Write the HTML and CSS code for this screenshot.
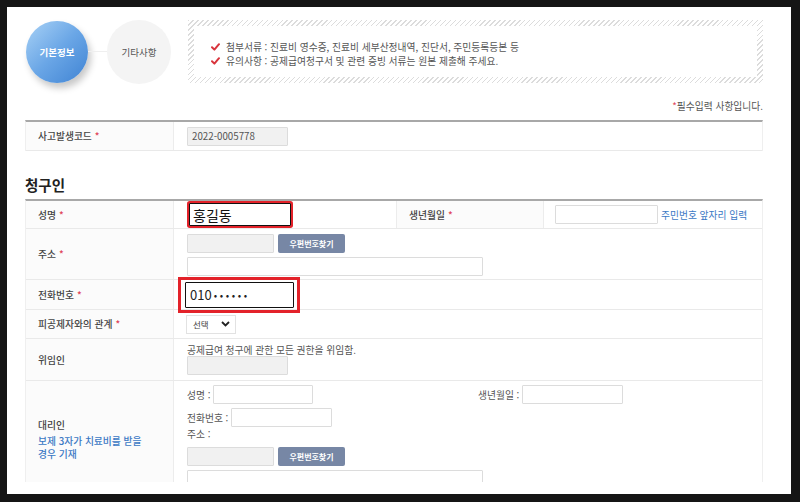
FILE: index.html
```html
<!DOCTYPE html>
<html lang="ko">
<head>
<meta charset="utf-8">
<title>청구서 작성</title>
<link rel="stylesheet" href="styles.css">
</head>
<body>
<div class="frame">
  <div class="top">
    <div class="tabs">
      <div class="tab tab-on">기본정보</div>
      <div class="tab-line"></div>
      <div class="tab tab-off">기타사항</div>
    </div>
    <div class="notice">
      <div class="notice-inner">
        <p class="notice-line"><svg class="check" width="9" height="8" viewBox="0 0 9 8"><path d="M1 4.2 L3.4 6.6 L8 1.2" fill="none" stroke="#d8343c" stroke-width="2" stroke-linecap="round" stroke-linejoin="round"/></svg>첨부서류 : 진료비 영수증, 진료비 세부산정내역, 진단서, 주민등록등본 등</p>
        <p class="notice-line"><svg class="check" width="9" height="8" viewBox="0 0 9 8"><path d="M1 4.2 L3.4 6.6 L8 1.2" fill="none" stroke="#d8343c" stroke-width="2" stroke-linecap="round" stroke-linejoin="round"/></svg>유의사항 : 공제급여청구서 및 관련 증빙 서류는 원본 제출해 주세요.</p>
      </div>
    </div>
  </div>

  <p class="req"><span class="star">*</span>필수입력 사항입니다.</p>

  <div class="table">
    <div class="row row-code">
      <div class="th"><span>사고발생코드</span><span class="star">*</span></div>
      <div class="td"><div class="inp inp-ro w101">2022-0005778</div></div>
    </div>
  </div>

  <h2 class="heading">청구인</h2>

  <div class="table table-main">
    <div class="row row-name">
      <div class="th"><span>성명</span><span class="star">*</span></div>
      <div class="td"><div class="inp inp-hl-name">홍길동</div></div>
      <div class="th th-mid"><span>생년월일</span><span class="star">*</span></div>
      <div class="td td-birth"><div class="inp w103"></div><span class="link">주민번호 앞자리 입력</span></div>
    </div>

    <div class="row row-addr">
      <div class="th"><span>주소</span><span class="star">*</span></div>
      <div class="td td-col">
        <div class="line"><div class="inp inp-ro w87"></div><span class="btn">우편번호찾기</span></div>
        <div class="inp w296"></div>
      </div>
    </div>

    <div class="row row-tel">
      <div class="th"><span>전화번호</span><span class="star">*</span></div>
      <div class="td"><div class="tel-wrap"><div class="inp inp-hl-tel">010<span class="dots">••••••</span></div></div></div>
    </div>

    <div class="row row-rel">
      <div class="th"><span>피공제자와의 관계</span><span class="star">*</span></div>
      <div class="td td-sel">
        <div class="select">선택<svg class="chev" width="9" height="6" viewBox="0 0 9 6"><path d="M1 1 L4.5 4.5 L8 1" fill="none" stroke="#222" stroke-width="1.8"/></svg></div>
      </div>
    </div>

    <div class="row row-del">
      <div class="th">위임인</div>
      <div class="td td-col td-del">
        <p class="txt">공제급여 청구에 관한 모든 권한을 위임함.</p>
        <div class="inp inp-ro w101"></div>
      </div>
    </div>

    <div class="row row-agent">
      <div class="th th-agent">
        <p class="agent-title">대리인</p>
        <p class="agent-note">보제 3자가 치료비를 받을<br>경우 기재</p>
      </div>
      <div class="td td-col td-agent">
        <div class="line">
          <div class="pair pair-left"><span class="lbl">성명 :</span><div class="inp w100"></div></div>
          <div class="pair"><span class="lbl">생년월일 :</span><div class="inp w101"></div></div>
        </div>
        <div class="line"><span class="lbl">전화번호 :</span><div class="inp w101"></div></div>
        <p class="lbl lbl-addr">주소 :</p>
        <div class="line line-zip"><div class="inp inp-ro w87"></div><span class="btn">우편번호찾기</span></div>
        <div class="inp w296"></div>
      </div>
    </div>
  </div>
</div>
</body>
</html>
```

FILE: styles.css
```css
* { box-sizing: border-box; }
html, body { margin: 0; padding: 0; }
body {
  background: #151515;
  padding: 7px;
  font-family: "Noto Sans CJK KR", "Noto Sans", sans-serif;
  font-size: 9.75px;
  color: #444;
}
p { margin: 0; }

.frame {
  width: 784px;
  height: 487px;
  background: #fff;
  overflow: hidden;
  padding: 13px 28px 0 18px;
}

/* top: tabs + notice */
.top {
  display: flex;
  height: 63px;
}
.tabs {
  width: 165px;
  display: flex;
  align-items: center;
  padding-left: 1px;
}
.tab {
  width: 62px;
  height: 62px;
  border-radius: 50%;
  display: flex;
  align-items: center;
  justify-content: center;
  font-size: 9.5px;
  flex: none;
}
.tab-on {
  background: linear-gradient(135deg, #a9d2f6 0%, #6aa6e6 50%, #3f83d3 100%);
  color: #fff;
  font-weight: 700;
  box-shadow: 3px 5px 7px rgba(0, 0, 0, 0.22);
}
.tab-line {
  width: 19px;
  height: 1px;
  background: #efefef;
  flex: none;
}
.tab-off {
  width: 64px;
  height: 64px;
  background: #f4f4f4;
  color: #555;
}
.notice {
  width: 575px;
  flex: none;
  padding: 6px;
  background: repeating-linear-gradient(135deg, #dcdcdc 0 1px, #fff 1px 3.5px);
}
.notice-inner {
  background: #fff;
  height: 100%;
  display: flex;
  flex-direction: column;
  justify-content: center;
  padding: 4px 0 0 17px;
}
.notice-line {
  display: flex;
  align-items: center;
  line-height: 14px;
  color: #555;
}
.check { margin-right: 6px; flex: none; }

.req {
  margin-top: 16px;
  text-align: right;
  line-height: 14px;
  color: #555;
}
.star { color: #e0465a; }
.th .star { margin-left: 3px; }

/* tables */
.table {
  margin-top: 7px;
  border-top: 2px solid #a8a8a8;
  border-left: 1px solid #efefef;
  border-right: 1px solid #efefef;
}
.row {
  display: grid;
  grid-template-columns: 148px 1fr;
  border-bottom: 1px solid #e9e9e9;
}
.th {
  background: #fbfbfb;
  border-right: 1px solid #ececec;
  padding-left: 12px;
  display: flex;
  align-items: center;
  color: #444;
  font-weight: 500;
}
.td {
  padding-left: 13px;
  display: flex;
  align-items: center;
}
.td-col {
  flex-direction: column;
  align-items: flex-start;
}
.row-code { height: 29px; }

.heading {
  margin: 24px 0 4px;
  font-size: 14.5px;
  line-height: 20px;
  font-weight: 700;
  color: #222;
}

.table-main {
  margin-top: 0;
  height: 283px;
  overflow: hidden;
}

.row-name { grid-template-columns: 148px 222px 148px 1fr; height: 28px; }
.th-mid { border-left: 1px solid #ececec; }
.td-birth { padding-left: 11px; }
.link { color: #3a78c4; margin-left: 3px; }

.row-addr { height: 51px; }
.row-addr .td-col { padding-top: 5px; gap: 4px; }
.line { display: flex; align-items: center; gap: 4px; }

.row-tel { height: 30px; }
.row-rel { height: 29px; }
.row-del { height: 42px; }
.td-del { padding-top: 5px; }
.txt { line-height: 12px; color: #555; }

.row-agent { height: 140px; }
.th-agent {
  flex-direction: column;
  align-items: flex-start;
  padding-top: 38px;
}
.agent-title { line-height: 13px; margin-bottom: 3px; }
.agent-note { line-height: 13px; color: #3a78c4; }
.td-agent { padding-top: 4px; }
.td-agent .line { gap: 3px; }
.td-agent .line + .line { margin-top: 4px; }
.pair { display: flex; align-items: center; gap: 3px; }
.pair-left { width: 288px; }
.lbl { color: #555; }
.lbl-addr { line-height: 12px; margin-top: 1px; }
.td-agent .line-zip { margin-top: 7px; gap: 4px; }
.td-agent .w296 { margin-top: 4px; }

/* inputs */
.inp {
  height: 19px;
  border: 1px solid #dcdcdc;
  background: #fff;
  border-radius: 1px;
  display: flex;
  align-items: center;
  padding-left: 4px;
  color: #555;
  flex: none;
}
.inp-ro { background: #f1f1f1; }
.w87 { width: 87px; }
.w100 { width: 100px; }
.w101 { width: 101px; }
.w103 { width: 103px; }
.w296 { width: 296px; }

.inp-hl-name {
  width: 102px;
  height: 23px;
  margin-left: 2px;
  border: 1px solid #111;
  box-shadow: 0 0 0 2px #e3222a;
  font-size: 14px;
  color: #111;
  padding-left: 3px;
}
.tel-wrap {
  position: relative;
  margin-left: -2px;
}
.tel-wrap::after {
  content: "";
  position: absolute;
  left: -7px;
  right: -6px;
  top: -5px;
  bottom: -5px;
  border: 3px solid #e3222a;
  pointer-events: none;
}
.inp-hl-tel {
  width: 109px;
  height: 26px;
  border: 1.5px solid #111;
  font-size: 13px;
  color: #222;
  padding-left: 4px;
}
.dots {
  font-size: 10px;
  letter-spacing: 2.6px;
  margin-left: 2px;
}

.btn {
  display: inline-flex;
  align-items: center;
  justify-content: center;
  width: 67px;
  height: 19px;
  background: #7787a5;
  color: #fff;
  font-size: 8px;
  font-weight: 700;
  border-radius: 2px;
}

.td-sel { padding-left: 12px; }
.select {
  width: 50px;
  height: 19px;
  border: 1px solid #e2e2e2;
  display: flex;
  align-items: center;
  justify-content: space-between;
  padding: 0 5px 0 6px;
  color: #444;
  font-size: 8.5px;
}
.chev { flex: none; }
```
